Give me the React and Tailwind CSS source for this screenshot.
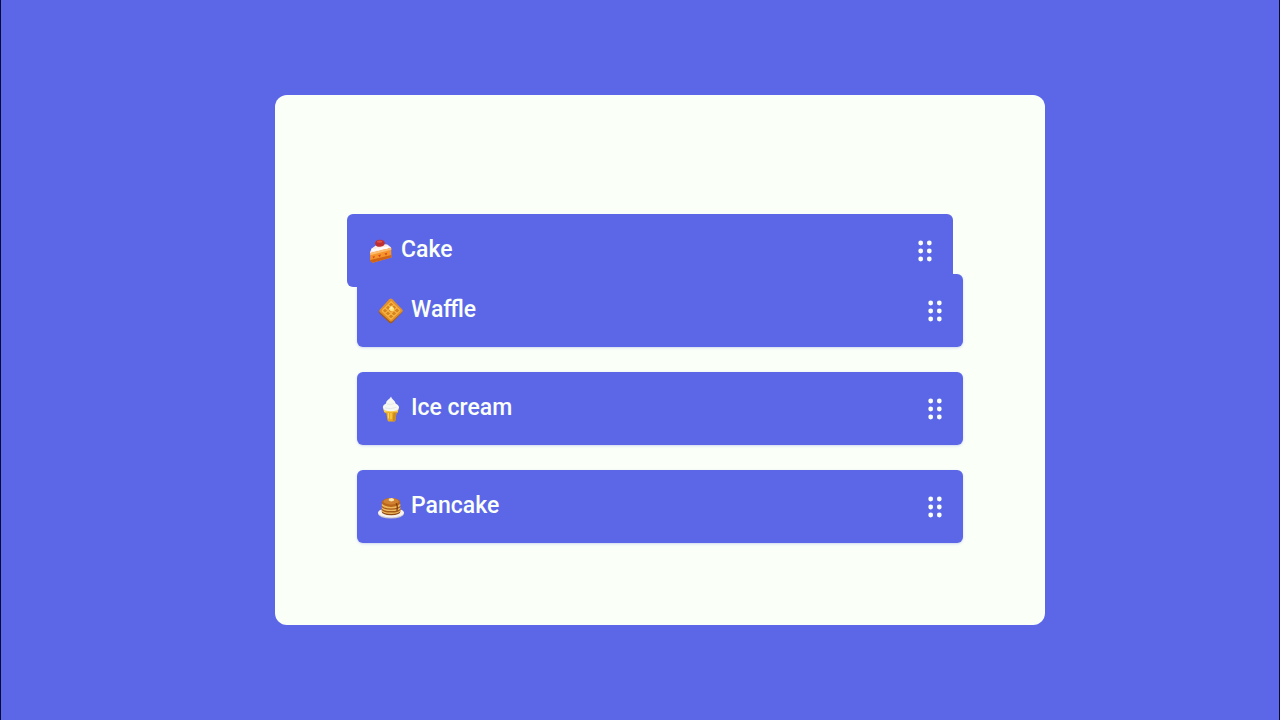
import { useState } from "react";
import clsx from "clsx";

function CakeIcon() {
  return (
    <svg viewBox="0 0 26 26" className="size-[26px] shrink-0" aria-hidden="true">
      <path d="M2 14.2 3.6 10.6 10.5 5.4l8.8 1.2 3.6 2.6.3 2.6-20.8 4.6z" fill="#fdeee8" />
      <path d="M2.2 15 23.2 9.8 23.4 19.4 4.6 24.8 2.1 22.8z" fill="#f5942b" />
      <path d="M2.2 15 23.2 9.8v2L2.3 17.2z" fill="#fbbd72" />
      <path d="M2.2 22 23.4 17v2.4L4.6 24.8 2.1 22.9z" fill="#cf6417" />
      <path d="m4.4 18.8 2.6-.8-1.2 2.4zM10 17.3l3-.8-1.2 2.7zM16.4 15.6l3-.8-1.2 2.7z" fill="#d8471f" />
      <path d="M3.6 11.4q3 1.8 5.4-.4 3 1.4 5.4-1.2 3 1 6-.8" fill="none" stroke="#ffffff" strokeWidth="1.6" />
      <path d="M7 5.2q.6-3.2 4.6-3.4 4.6-.2 5.2 3 .2 3.4-4.4 4-5.2.2-5.4-3.6z" fill="#bf2f30" />
      <ellipse cx="11.6" cy="3.7" rx="2.8" ry="1.1" fill="#d9534c" />
    </svg>
  );
}

function WaffleIcon() {
  return (
    <svg viewBox="0 0 26 26" className="size-[26px] shrink-0" aria-hidden="true">
      <path d="M1 12.6Q.6 14.4 1.6 15.6l9.8 9.2q1.4 1 2.8 0l9.6-10q1-1 .8-2.4z" fill="#a45a17" />
      <path d="M11.4 1q1.4-1 2.8 0l10.1 10.4q1 1.2 0 2.4l-9.9 9.1q-1.4 1-2.8 0l-9.9-8.8q-1-1.2 0-2.4z" fill="#e38f28" />
      <path d="M12.9 3.2 22.3 12.6 13 21.2 3.7 12.8z" fill="#d6841f" />
      <path
        d="m4 12.8 9.2-9.2M7 15.6l9.2-9.2M10 18.4l9.2-9.2M13 21.2l9.2-8.8M4 12.8l9 8.4M7 9.8l9 8.6M10 6.8l9.2 8.8M13 3.6l9.2 9"
        fill="none"
        stroke="#f6b345"
        strokeWidth="1.3"
      />
      <path d="m13.2 7.6 3 2.6-.4 2.6-3 .6-2-2.6z" fill="#ffe07a" />
      <path d="m13.4 8.6 1.4 1.4-1.2 1.4-1.6-1z" fill="#fff3b4" />
    </svg>
  );
}

function IceCreamIcon() {
  return (
    <svg viewBox="0 0 26 26" className="size-[26px] shrink-0" aria-hidden="true">
      <path d="M5.4 13h15l-.6 3.6-1.4.8-1 7.2q-.2 1-1.4 1h-5q-1.2 0-1.4-1L8.4 17.4l-1.8-.8z" fill="#e9a822" />
      <path d="M5.4 13h15l-.6 3.2H6.2z" fill="#f5cb52" />
      <path d="M15.4 16.4h3.8l-.8 1-1 7.2q-.2 1-1.4 1h-1.4z" fill="#cc8b20" />
      <path d="M10.4 17v5.6M13 17v6" stroke="#ffd455" strokeWidth="1.2" />
      <path d="M13 .6q.4 1.6 2.4 3.4 1.8 1.4 2.2 3.4 2.8 1.2 3.4 3.4.2 2.8-2.4 3.6-5.6 1.6-11.2 0-2.6-.8-2.6-3.4.2-2.4 3.2-3.6 0-2 1.8-3.4Q12.4 2.4 13 .6z" fill="#f6f6f2" />
      <path d="M9 8q3.6 1.2 7-.6M7 12q5.4 1.6 11.4-.6" fill="none" stroke="#e2e5e8" strokeWidth="0.9" />
    </svg>
  );
}

function PancakeIcon() {
  return (
    <svg viewBox="0 0 26 26" className="size-[26px] shrink-0" aria-hidden="true">
      <ellipse cx="13" cy="19.6" rx="12.9" ry="5" fill="#c9c7cf" />
      <ellipse cx="13" cy="18.6" rx="12.9" ry="4.9" fill="#f8f2ef" />
      <path d="M3.6 16.4q-.2 4.8 9.4 4.8t9.6-4.8z" fill="#8d4813" />
      <ellipse cx="13.1" cy="16.6" rx="9.6" ry="3.4" fill="#edb75c" />
      <ellipse cx="13.1" cy="15.3" rx="9.6" ry="3.3" fill="#a65a18" />
      <ellipse cx="13.1" cy="13.8" rx="9.5" ry="3.3" fill="#f0bd65" />
      <ellipse cx="13.1" cy="12.5" rx="9.5" ry="3.3" fill="#a65a18" />
      <ellipse cx="13.1" cy="11" rx="9.5" ry="3.5" fill="#efb75b" />
      <ellipse cx="13.1" cy="8.4" rx="9.3" ry="4.5" fill="#b9651a" />
      <ellipse cx="13.1" cy="7.4" rx="7.6" ry="3.1" fill="#d08230" />
      <path d="M18.4 9.8q1.4 2 .6 6.4" fill="none" stroke="#7d3b0d" strokeWidth="1.3" strokeLinecap="round" />
      <path d="m10.8 4.8 3-.9 2.2 1.2-.2 1.7-2.6.8-2.4-1.2z" fill="#fbe6b4" />
    </svg>
  );
}

function GripIcon() {
  return (
    <svg viewBox="0 0 14 22" className="h-[22px] w-[14px]" fill="currentColor" aria-hidden="true">
      <circle cx="2.7" cy="3" r="2.4" />
      <circle cx="11.3" cy="3" r="2.4" />
      <circle cx="2.7" cy="11" r="2.4" />
      <circle cx="11.3" cy="11" r="2.4" />
      <circle cx="2.7" cy="19" r="2.4" />
      <circle cx="11.3" cy="19" r="2.4" />
    </svg>
  );
}

const desserts = [
  { id: "cake", name: "Cake", Icon: CakeIcon },
  { id: "waffle", name: "Waffle", Icon: WaffleIcon },
  { id: "ice-cream", name: "Ice cream", Icon: IceCreamIcon },
  { id: "pancake", name: "Pancake", Icon: PancakeIcon }
];

function DessertItem({ dessert, dragging, onGrab }) {
  const { name, Icon } = dessert;

  return (
    <li
      className={clsx(
        "flex h-[73px] items-center rounded-md bg-[#5c67e8] px-[21px] text-[#fafff8]",
        dragging ? "relative -left-[10px] top-[38px] z-10" : "shadow-sm shadow-[#5c67e8]/20"
      )}
    >
      <Icon />
      <span className="ml-[7px] flex-1 text-[23px] font-medium">{name}</span>
      <button type="button" aria-label={`Move ${name}`} onPointerDown={onGrab} className="cursor-grab">
        <GripIcon />
      </button>
    </li>
  );
}

function App() {
  const [activeId, setActiveId] = useState("cake");

  return (
    <main className="flex min-h-screen items-center justify-center border-x border-[#080b38] bg-[#5c67e8] pl-10 font-['Roboto',sans-serif]">
      <section className="w-full max-w-[770px] rounded-xl bg-[#fafff8] px-[82px] pt-[81px] pb-[82px]">
        <ul className="flex flex-col gap-[25px]">
          {desserts.map((dessert) => (
            <DessertItem
              key={dessert.id}
              dessert={dessert}
              dragging={dessert.id === activeId}
              onGrab={() => setActiveId(dessert.id)}
            />
          ))}
        </ul>
      </section>
    </main>
  );
}

export default App;
